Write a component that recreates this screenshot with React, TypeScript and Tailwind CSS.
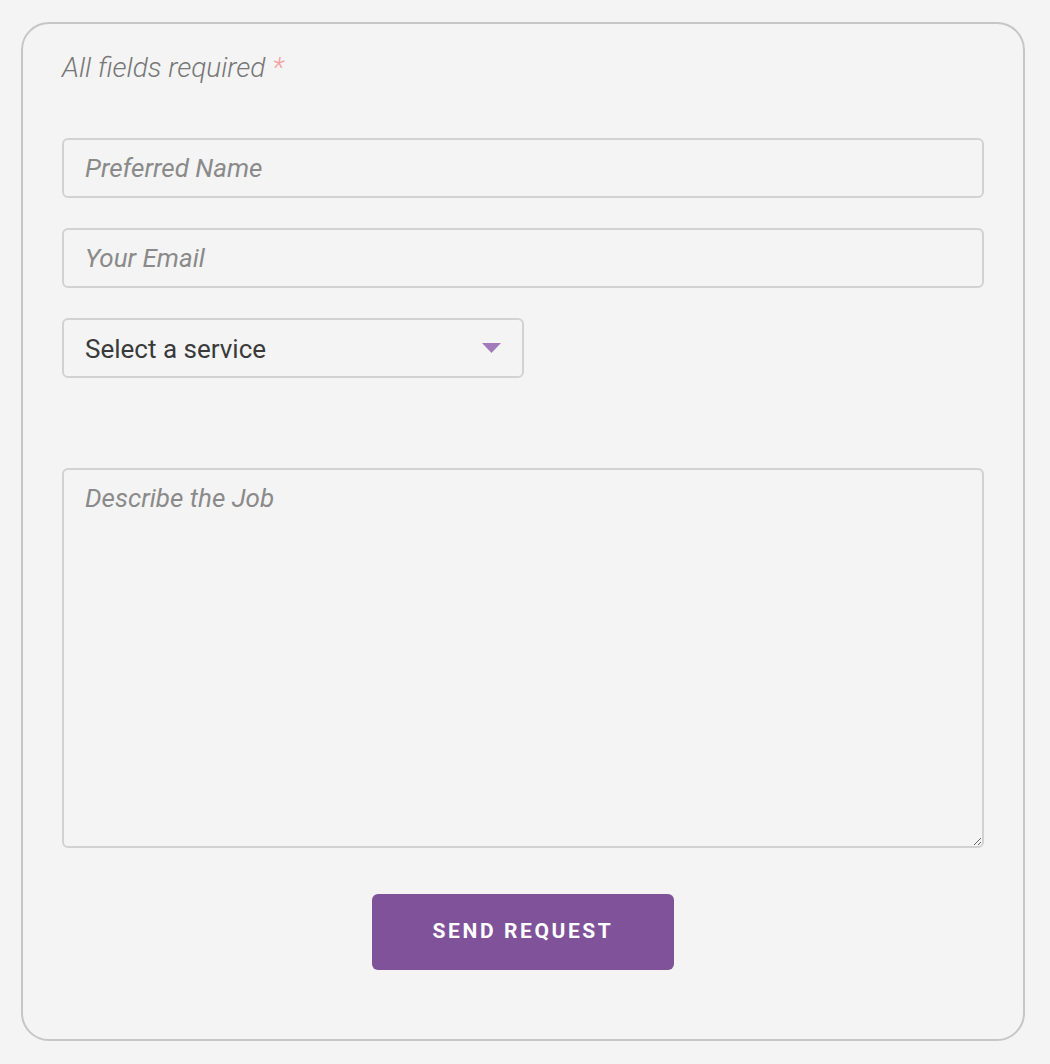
import React from "react";

const fieldBase =
  "w-full h-[60px] rounded-[6px] border-2 border-[#d2d2d2] bg-[#f4f4f4] px-[21px] text-[26px] text-[#3a3a3a] outline-none placeholder:italic placeholder:text-[#8a8a8a]";

export default function App() {
  return (
    <div className="min-h-[1064px] w-full bg-[#f4f4f4] pt-[22px] px-[21px] font-['Roboto',sans-serif]">
      <form className="flex w-[1004px] flex-col rounded-[28px] border-2 border-[#c6c6c6] px-[39px] pt-[26px] pb-[69px]">
        <p className="text-[28px] italic font-light leading-[36px] text-[#777]">
          All fields required <span className="text-[#f2a0a0]">*</span>
        </p>

        <div className="mt-[52px] flex flex-col gap-[30px]">
          <input type="text" placeholder="Preferred Name" className={fieldBase} />
          <input type="email" placeholder="Your Email" className={fieldBase} />
          <div className="relative w-[462px]">
            <select
              defaultValue=""
              className={`${fieldBase} appearance-none font-normal pt-[2px]`}
            >
              <option value="">Select a service</option>
              <option value="repair">Repair</option>
              <option value="install">Installation</option>
            </select>
            <svg
              className="pointer-events-none absolute right-[23px] top-[25px]"
              width="19"
              height="10"
              viewBox="0 0 19 10"
            >
              <path d="M0 0h19L9.5 10z" fill="#a27cba" />
            </svg>
          </div>
        </div>

        <textarea
          placeholder="Describe the Job"
          className="mt-[90px] h-[380px] w-full rounded-[6px] border-2 border-[#d2d2d2] bg-[#f4f4f4] px-[21px] py-[9px] text-[26px] text-[#3a3a3a] outline-none placeholder:italic placeholder:text-[#8a8a8a]"
        />

        <div className="mt-[46px] flex justify-center">
          <button
            type="button"
            className="h-[76px] w-[302px] rounded-[6px] bg-[#7f5299] pt-[0px] text-[21px] font-bold tracking-[2.6px] text-white"
          >
            SEND REQUEST
          </button>
        </div>
      </form>
    </div>
  );
}
